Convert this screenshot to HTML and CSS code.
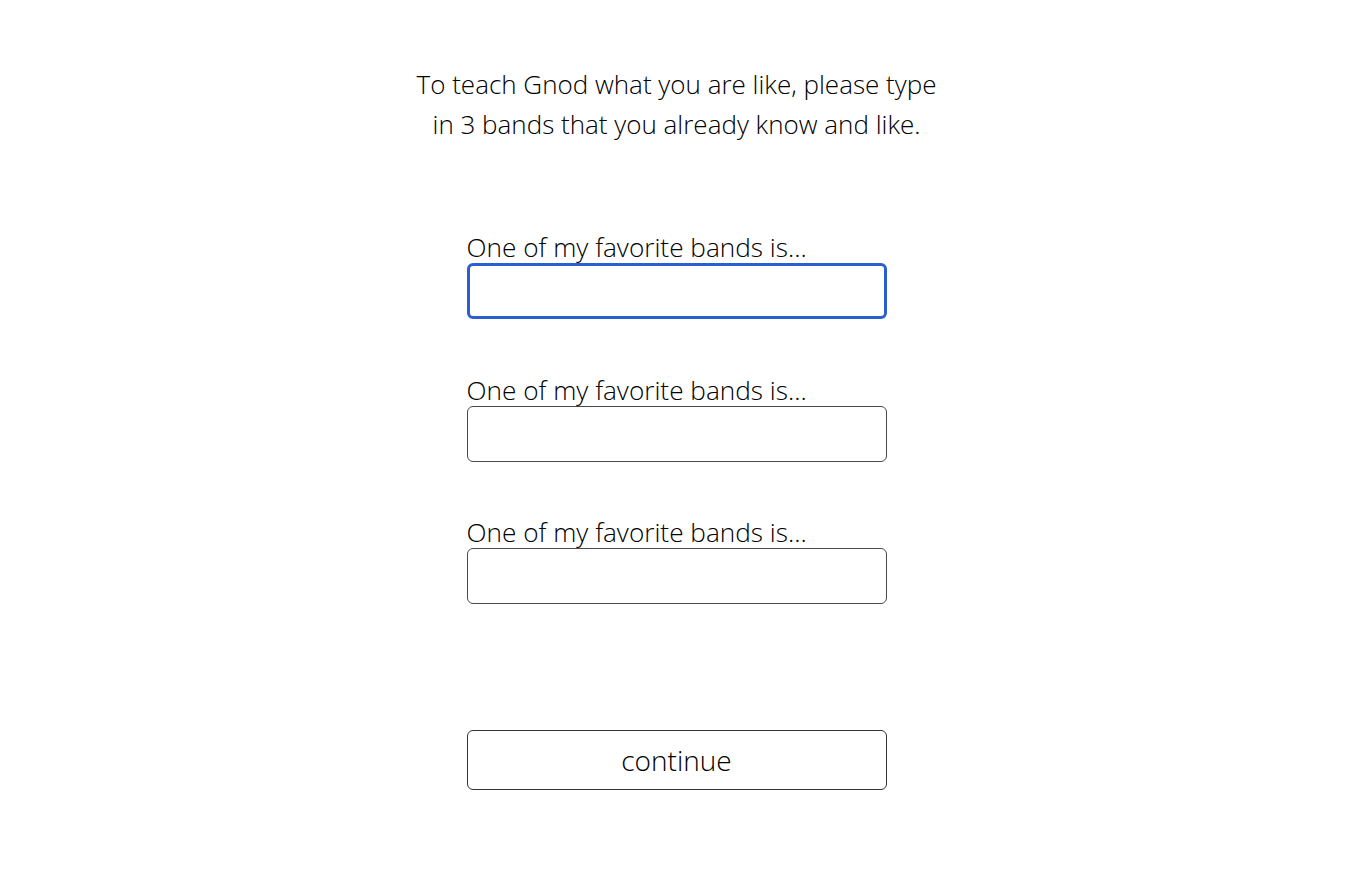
FILE: index.html
```html
<!DOCTYPE html>
<html>
<head>
<meta charset="utf-8">
<link rel="stylesheet" href="styles.css">
</head>
<body>
<main class="page">
  <p class="intro">To teach Gnod what you are like, please type<br>in 3 bands that you already know and like.</p>
  <form class="bands">
    <label class="field">
      <span class="label">One of my favorite bands is...</span>
      <span class="input focused"></span>
    </label>
    <label class="field">
      <span class="label">One of my favorite bands is...</span>
      <span class="input"></span>
    </label>
    <label class="field">
      <span class="label">One of my favorite bands is...</span>
      <span class="input"></span>
    </label>
    <div class="button">continue</div>
  </form>
</main>
</body>
</html>
```

FILE: styles.css
```css
html, body {
  margin: 0;
  padding: 0;
  background: #fff;
}
.page {
  width: 1353px;
  display: flex;
  flex-direction: column;
  align-items: center;
  font-family: "Open Sans", sans-serif;
  font-weight: 300;
  color: #000;
}
.intro {
  margin: 64px 0 0 0;
  font-size: 26px;
  line-height: 40px;
  text-align: center;
}
.bands {
  width: 420px;
  display: flex;
  flex-direction: column;
  margin-top: 85px;
}
.field {
  display: flex;
  flex-direction: column;
  margin-bottom: 52.5px;
}
.label {
  font-size: 26.2px;
  line-height: 36px;
  height: 34px;
  white-space: nowrap;
}
.input {
  display: block;
  box-sizing: border-box;
  height: 56px;
  border: 1.5px solid #4a4a4a;
  border-radius: 6px;
}
.input.focused {
  border: 3px solid #2b5fcf;
}
.button {
  box-sizing: border-box;
  margin-top: 73.5px;
  height: 60px;
  border: 1.5px solid #333;
  border-radius: 6px;
  font-size: 28px;
  line-height: 58px;
  text-align: center;
}
```
